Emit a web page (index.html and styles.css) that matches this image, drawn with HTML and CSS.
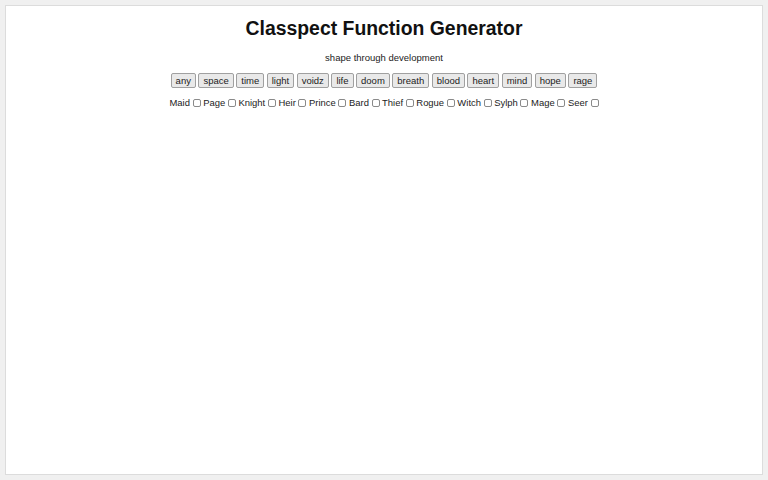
FILE: index.html
```html
<!DOCTYPE html>
<html>
<head>
<meta charset="utf-8">
<link rel="stylesheet" href="styles.css">
</head>
<body>
<div class="card">
  <h1 class="title">Classpect Function Generator</h1>
  <p class="subtitle">shape through development</p>
  <div class="aspects">
    <button class="btn">any</button>
    <button class="btn">space</button>
    <button class="btn">time</button>
    <button class="btn">light</button>
    <button class="btn">voidz</button>
    <button class="btn">life</button>
    <button class="btn">doom</button>
    <button class="btn">breath</button>
    <button class="btn">blood</button>
    <button class="btn">heart</button>
    <button class="btn">mind</button>
    <button class="btn">hope</button>
    <button class="btn">rage</button>
  </div>
  <div class="classes">
    Maid <input type="checkbox" class="chk">
    Page <input type="checkbox" class="chk">
    Knight <input type="checkbox" class="chk">
    Heir <input type="checkbox" class="chk">
    Prince <input type="checkbox" class="chk">
    Bard <input type="checkbox" class="chk">
    Thief <input type="checkbox" class="chk">
    Rogue <input type="checkbox" class="chk">
    Witch <input type="checkbox" class="chk">
    Sylph <input type="checkbox" class="chk">
    Mage <input type="checkbox" class="chk">
    Seer <input type="checkbox" class="chk">
  </div>
</div>
</body>
</html>
```
FILE: styles.css
```css
html, body {
  margin: 0;
  padding: 0;
  background: #f0f0f0;
}
body {
  padding: 5px;
  font-family: "Liberation Sans", Arial, sans-serif;
  color: #111;
}
.card {
  background: #fff;
  border: 1px solid #dcdcdc;
  box-sizing: border-box;
  height: 470px;
  text-align: center;
}
.title {
  font-size: 19.4px;
  font-weight: bold;
  margin: 11px 0 0;
  line-height: 22px;
}
.subtitle {
  font-size: 9.5px;
  margin: 13px 0 0;
  line-height: 12px;
  color: #222;
}
.aspects {
  display: flex;
  justify-content: center;
  gap: 2.5px;
  margin-top: 9px;
}
.btn {
  font-family: "Liberation Sans", Arial, sans-serif;
  font-size: 9.5px;
  line-height: 11px;
  padding: 1px 4px;
  margin: 0;
  background: #e9e9e9;
  border: 1px solid #a0a0a0;
  border-radius: 2px;
  color: #222;
}
.classes {
  margin-top: 9px;
  font-size: 9.45px;
  line-height: 12px;
  color: #222;
}
.chk {
  appearance: none;
  -webkit-appearance: none;
  width: 8px;
  height: 8px;
  margin: 0;
  border: 1px solid #8a8a8a;
  border-radius: 2px;
  background: #fff;
  vertical-align: -1px;
}
```
